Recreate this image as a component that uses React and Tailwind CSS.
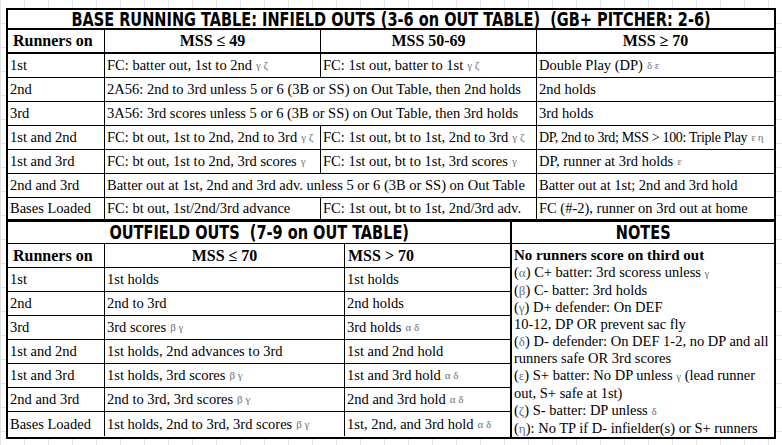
import React from "react";

const serif = { fontFamily: '"Liberation Serif", "DejaVu Serif", serif' };

const G = ({ children, tight }) => (
  <span className={`${tight ? "" : "ml-[4px]"} text-[11px] text-gray-500`}>{children}</span>
);

const infield = [
  { on: "1st", cells: [["FC: batter out, 1st to 2nd", "γ ζ"], ["FC: 1st out, batter to 1st", "γ ζ"], ["Double Play (DP)", "δ ε"]] },
  { on: "2nd", span: "2A56: 2nd to 3rd unless 5 or 6 (3B or SS) on Out Table, then 2nd holds", cells: [["2nd holds"]] },
  { on: "3rd", span: "3A56: 3rd scores unless 5 or 6 (3B or SS) on Out Table, then 3rd holds", cells: [["3rd holds"]] },
  { on: "1st and 2nd", cells: [["FC: bt out, 1st to 2nd, 2nd to 3rd", "γ ζ"], ["FC: 1st out, bt to 1st, 2nd to 3rd", "γ ζ"], ["DP, 2nd to 3rd; MSS > 100: Triple Play", "ε η", true]] },
  { on: "1st and 3rd", cells: [["FC: bt out, 1st to 2nd, 3rd scores", "γ"], ["FC: 1st out, bt to 1st, 3rd scores", "γ"], ["DP, runner at 3rd holds", "ε"]] },
  { on: "2nd and 3rd", span: "Batter out at 1st, 2nd and 3rd adv. unless 5 or 6 (3B or SS) on Out Table", cells: [["Batter out at 1st; 2nd and 3rd hold"]] },
  { on: "Bases Loaded", cells: [["FC: bt out, 1st/2nd/3rd advance"], ["FC: 1st out, bt to 1st, 2nd/3rd adv."], ["FC (#-2), runner on 3rd out at home"]] },
];

const outfield = [
  ["1st", ["1st holds"], ["1st holds"]],
  ["2nd", ["2nd to 3rd"], ["2nd holds"]],
  ["3rd", ["3rd scores", "β γ"], ["3rd holds", "α δ"]],
  ["1st and 2nd", ["1st holds, 2nd advances to 3rd"], ["1st and 2nd hold"]],
  ["1st and 3rd", ["1st holds, 3rd scores", "β γ"], ["1st and 3rd hold", "α δ"]],
  ["2nd and 3rd", ["2nd to 3rd, 3rd scores", "β γ"], ["2nd and 3rd hold", "α δ"]],
  ["Bases Loaded", ["1st holds, 2nd to 3rd, 3rd scores", "β γ"], ["1st, 2nd, and 3rd hold", "α δ"]],
];

const Cell = ({ c, last }) => (
  <div
    className={`flex items-center whitespace-nowrap overflow-hidden px-[2px] border-black ${last ? "" : "border-r"} ${c[2] ? "text-[14px] tracking-[-0.35px]" : ""}`}
  >
    {c[0]}
    {c[1] && <G>{c[1]}</G>}
  </div>
);

const Title = ({ children }) => (
  <span
    className="inline-block whitespace-nowrap text-[19px] font-bold text-black scale-x-[0.85]"
    style={{ fontFamily: '"Liberation Sans Narrow", "DejaVu Sans Condensed", sans-serif' }}
  >
    {children}
  </span>
);

const P = ({ l, children }) => (
  <div className="whitespace-nowrap">
    (<span className="text-gray-500 text-[13px]">{l}</span>){children}
  </div>
);

export default function App() {
  return (
    <div
      className="w-[782px] h-[445px] bg-white overflow-hidden pt-[8px] pl-[6px] bg-[linear-gradient(90deg,#e4e4e4_1px,transparent_1px),linear-gradient(0deg,#e4e4e4_1px,transparent_1px)] bg-[size:24px_24px]"
      style={serif}
    >
      <div className="w-[770px] border-2 border-black bg-white text-[14.5px] text-black leading-none">
        {/* infield */}
        <div className="h-[20px] flex items-center justify-center border-b-2 border-black">
          <Title>BASE RUNNING TABLE: INFIELD OUTS (3-6 on OUT TABLE)&nbsp;&nbsp;(GB+ PITCHER: 2-6)</Title>
        </div>
        <div className="grid grid-cols-[97px_216px_216px_1fr] h-[24px] border-b-2 border-black font-bold text-[16px]">
          <div className="flex items-center pl-[5px] border-r border-black">Runners on</div>
          <div className="flex items-center justify-center border-r border-black">MSS ≤ 49</div>
          <div className="flex items-center justify-center border-r border-black">MSS 50-69</div>
          <div className="flex items-center justify-center">MSS ≥ 70</div>
        </div>
        {infield.map((r, i) => (
          <div
            key={r.on}
            className={`grid grid-cols-[97px_216px_216px_1fr] h-[24px] border-black ${i === infield.length - 1 ? "border-b-[3px]" : "border-b"}`}
          >
            <div className="flex items-center px-[2px] border-r border-black">{r.on}</div>
            {r.span ? (
              <>
                <div className="col-span-2 flex items-center whitespace-nowrap overflow-hidden px-[2px] border-r border-black">{r.span}</div>
                <Cell c={r.cells[0]} last />
              </>
            ) : (
              r.cells.map((c, j) => <Cell key={j} c={c} last={j === 2} />)
            )}
          </div>
        ))}

        {/* outfield + notes */}
        <div className="flex">
          <div className="w-[504px] border-r-2 border-black">
            <div className="h-[22px] flex items-center justify-center border-b border-black">
              <Title>OUTFIELD OUTS&nbsp;&nbsp;(7-9 on OUT TABLE)</Title>
            </div>
            <div className="grid grid-cols-[97px_240px_1fr] h-[24px] border-b border-black font-bold text-[16px]">
              <div className="flex items-center pl-[5px] border-r border-black">Runners on</div>
              <div className="flex items-center justify-center border-r border-black">MSS ≤ 70</div>
              <div className="flex items-center pl-[3px]">MSS &gt; 70</div>
            </div>
            {outfield.map((r, i) => (
              <div
                key={r[0]}
                className={`grid grid-cols-[97px_240px_1fr] h-[24px] border-black ${i === outfield.length - 1 ? "" : "border-b"}`}
              >
                <div className="flex items-center px-[2px] border-r border-black">{r[0]}</div>
                <Cell c={r[1]} />
                <Cell c={r[2]} last />
              </div>
            ))}
          </div>
          <div className="flex-1 min-w-0">
            <div className="h-[22px] flex items-center justify-center border-b border-black">
              <Title>NOTES</Title>
            </div>
            <div className="px-[2px] pt-[2px] text-[14.5px] leading-[17px]">
              <div className="font-bold text-[15px] leading-[18px]">No runners score on third out</div>
              <P l="α"> C+ batter: 3rd scoress unless <G tight>γ</G></P>
              <P l="β"> C- batter: 3rd holds</P>
              <P l="γ"> D+ defender: On DEF</P>
              <div>10-12, DP OR prevent sac fly</div>
              <P l="δ"> D- defender: On DEF 1-2, no DP and all</P>
              <div>runners safe OR 3rd scores</div>
              <P l="ε"> S+ batter: No DP unless <G tight>γ</G> (lead runner</P>
              <div>out, S+ safe at 1st)</div>
              <P l="ζ"> S- batter: DP unless <G tight>δ</G></P>
              <P l="η">: No TP if D- infielder(s) or S+ runners</P>
            </div>
          </div>
        </div>
      </div>
    </div>
  );
}
